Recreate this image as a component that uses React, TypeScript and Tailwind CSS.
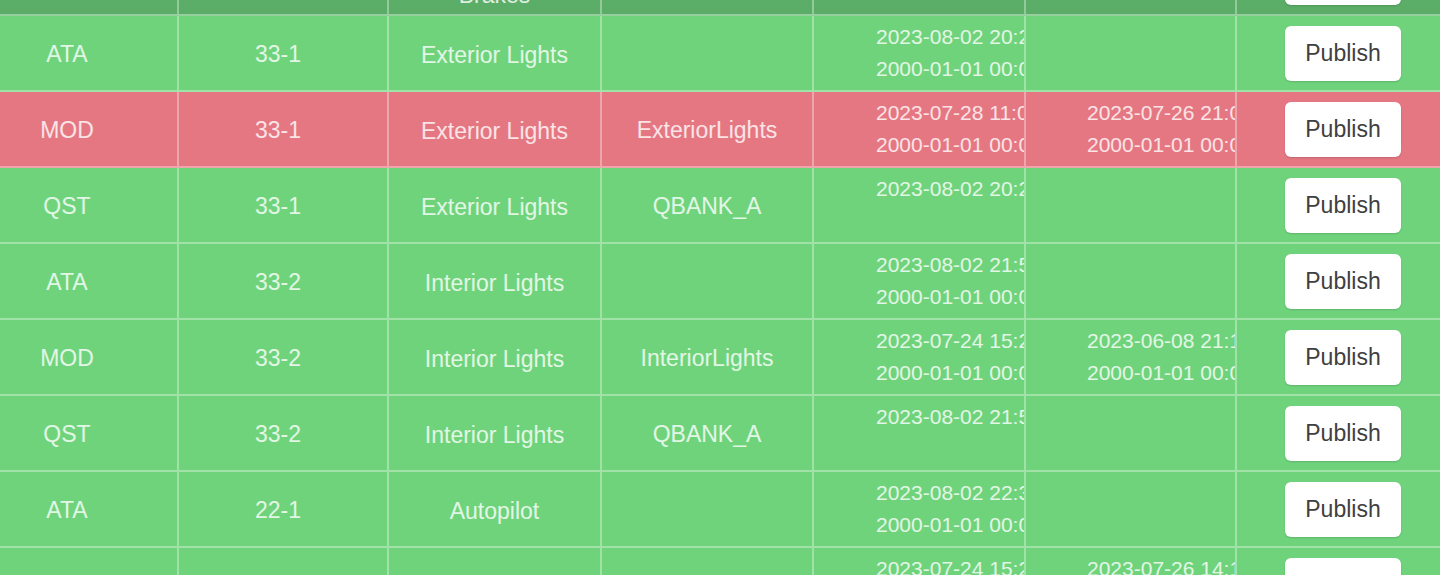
import React from "react";

type Row = {
  type: string;
  code: string;
  name: string;
  key: string;
  d1: string[];
  d2: string[];
  red?: boolean;
  top?: boolean;
};

const rows: Row[] = [
  { type: "", code: "", name: "Brakes", key: "", d1: ["", ""], d2: ["", ""], top: true },
  { type: "ATA", code: "33-1", name: "Exterior Lights", key: "", d1: ["2023-08-02 20:25:41", "2000-01-01 00:00:00"], d2: ["", ""] },
  { type: "MOD", code: "33-1", name: "Exterior Lights", key: "ExteriorLights", d1: ["2023-07-28 11:04:22", "2000-01-01 00:00:00"], d2: ["2023-07-26 21:03:17", "2000-01-01 00:00:00"], red: true },
  { type: "QST", code: "33-1", name: "Exterior Lights", key: "QBANK_A", d1: ["2023-08-02 20:25:48", ""], d2: ["", ""] },
  { type: "ATA", code: "33-2", name: "Interior Lights", key: "", d1: ["2023-08-02 21:53:10", "2000-01-01 00:00:00"], d2: ["", ""] },
  { type: "MOD", code: "33-2", name: "Interior Lights", key: "InteriorLights", d1: ["2023-07-24 15:22:09", "2000-01-01 00:00:00"], d2: ["2023-06-08 21:11:45", "2000-01-01 00:00:00"] },
  { type: "QST", code: "33-2", name: "Interior Lights", key: "QBANK_A", d1: ["2023-08-02 21:53:31", ""], d2: ["", ""] },
  { type: "ATA", code: "22-1", name: "Autopilot", key: "", d1: ["2023-08-02 22:37:05", "2000-01-01 00:00:00"], d2: ["", ""] },
  { type: "", code: "", name: "", key: "", d1: ["2023-07-24 15:25:40", "2000-01-01 00:00:00"], d2: ["2023-07-26 14:10:02", "2000-01-01 00:00:00"] },
];

function DateCell({ lines, width, pl }: { lines: string[]; width: string; pl: string }) {
  return (
    <div className={`${width} ${pl} shrink-0 h-full border-r-2 border-white/35 overflow-hidden flex flex-col justify-center whitespace-nowrap text-[21px] leading-[32px] text-white/80`}>
      <div>{lines[0] || "\u00a0"}</div>
      <div>{lines[1] || "\u00a0"}</div>
    </div>
  );
}

export default function App() {
  return (
    <div
      className="w-[1440px] h-[575px] overflow-hidden bg-[#6fd37c]"
      style={{ fontFamily: '"Liberation Sans", Arial, sans-serif' }}
    >
      <div className="mt-[-60px] ml-[-33px] w-[1482px]">
        {rows.map((r, i) => (
          <div
            key={i}
            className={`relative flex h-[76px] border-b-2 border-white/35 ${
              r.red ? "bg-[#e57782]" : r.top ? "bg-gradient-to-b from-[#5fb66b] to-[#5aac66]" : "bg-[#6fd37c]"
            }`}
          >
            <div className="w-[212px] shrink-0 h-full border-r-2 border-white/35 flex items-center justify-center pr-[10px] pt-[3px] text-[23px] text-white/80">
              {r.type}
            </div>
            <div className="w-[210px] shrink-0 h-full border-r-2 border-white/35 flex items-center justify-center pr-[10px] pt-[3px] text-[23px] text-white/80">
              {r.code}
            </div>
            <div className="w-[213px] shrink-0 h-full border-r-2 border-white/35 flex flex-col items-center justify-center pt-[3px] text-[23px] leading-[34px] text-white/80">
              {r.top ? <span className="mt-[32px]">{r.name}</span> : <span>{r.name}</span>}
            </div>
            <div className="w-[212px] shrink-0 h-full border-r-2 border-white/35 flex items-center justify-center pt-[3px] text-[23px] text-white/80">
              {r.key}
            </div>
            <DateCell lines={r.d1} width="w-[212px]" pl="pl-[62px]" />
            <DateCell lines={r.d2} width="w-[211px]" pl="pl-[61px]" />
            <div className="w-[212px] shrink-0 h-full flex items-center justify-center pt-[1px]">
              <button className="w-[116px] h-[55px] bg-white rounded-[6px] text-[23px] text-[#404040] shadow-[0_1px_2px_rgba(0,0,0,0.15)]">
                Publish
              </button>
            </div>
          </div>
        ))}
      </div>
    </div>
  );
}
